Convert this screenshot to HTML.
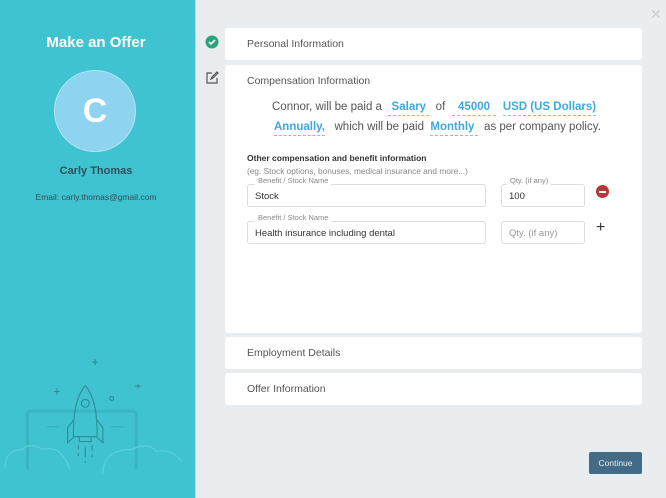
<!DOCTYPE html>
<html><head><style>
*{margin:0;padding:0;box-sizing:border-box}
body{width:666px;height:498px;overflow:hidden;background:#e9edf0;font-family:"Liberation Sans",sans-serif;position:relative}
.left{position:absolute;left:0;top:0;width:196px;height:498px;background:#40c3d0;border-right:1px solid #a8dfe8}
.t{position:absolute;color:#fff}
.card{position:absolute;left:225px;width:417px;background:#fff;border-radius:3px}
.card .h{position:absolute;left:22px;font-size:10.5px;color:#555}
.abs{position:absolute}
.blue{color:#3fa9dc;border-bottom:1px dashed #7cc4e8;padding-bottom:2px;font-weight:bold}
.inp{position:absolute;border:1px solid #dcdcdc;border-radius:3px;height:23px;font-size:9.5px;color:#333;padding:6px 7px}
.lab{position:absolute;font-size:7.5px;color:#888;background:#fff;padding:0 3px}
</style></head><body>
<div class="left">
<div class="t" style="left:0;width:192px;top:34px;text-align:center;font-size:15px;font-weight:bold">Make an Offer</div>
<div class="abs" style="left:54px;top:70px;width:82px;height:82px;border-radius:50%;background:#8ed3ef;border:1px solid #b6e4f3;color:#fff;font-size:34px;text-align:center;line-height:80px;font-weight:bold">C</div>
<div class="abs" style="left:0;width:192px;top:165px;text-align:center;font-size:11px;font-weight:bold;color:#2f4f59">Carly Thomas</div>
<div class="abs" style="left:0;width:192px;top:192px;text-align:center;font-size:8.5px;color:#2f4f59">Email: carly.thomas@gmail.com</div>
<svg class="abs" style="left:0;top:340px" width="196" height="158" viewBox="0 0 200 158" fill="none" stroke="#2e8f9a" stroke-width="1.2">
<path d="M28 130V75q0-4 4-4h103q4 0 4 4v55" stroke="#37aab6" stroke-width="3" opacity=".6"/>
<path d="M48 87h12M113 87h14" stroke="#37aab6"/>
<path d="M5 130q0-20 18-20q8-8 20 0q20-5 28 20M105 135q0-25 30-25q15-8 25 2q15-3 25 10" stroke="#5ad0dc"/>
<path d="M87 45q-13 15-12 52h24q1-37-12-52z"/>
<circle cx="87" cy="63" r="4"/>
<path d="M75 80l-6 8v15l6-5M99 80l6 8v15l-6-5M81 97v5h12v-5"/>
<path d="M80 106v4M87 108v10M94 106v5M87 122v2M80 114v3M94 115v3"/>
<path d="M97 18v6M94 21h6M58 48v6M55 51h6M141 43v5M138 45.5h6" />
<circle cx="114" cy="58" r="2"/>
</svg>
</div>
<div class="abs" style="left:650px;top:6px;color:#c8ced4;font-size:14px">✕</div>
<svg class="abs" style="left:205px;top:35px" width="14" height="14"><circle cx="7" cy="7" r="6.5" fill="#2aa37c"/><path d="M4 7l2 2 4-4" stroke="#fff" stroke-width="1.6" fill="none"/></svg>
<svg class="abs" style="left:205px;top:71px" width="14" height="14" fill="none" stroke="#555" stroke-width="1.2"><path d="M7 2H2v10h10V7"/><path d="M6 8l1-2 5-5 1 1-5 5z"/></svg>
<div class="card" style="top:28px;height:32px"><div class="h" style="top:10px">Personal Information</div></div>
<div class="card" style="top:65px;height:268px">
<div class="h" style="top:10px">Compensation Information</div>
<div class="abs" style="left:47px;top:36px;font-size:11.5px;color:#555;white-space:nowrap">Connor, will be paid a &nbsp;<span class="blue">&nbsp;Salary&nbsp;</span>&nbsp; of &nbsp;<span class="blue">&nbsp;&nbsp;45000&nbsp;&nbsp;</span>&nbsp;&nbsp;<span class="blue">USD (US Dollars)</span></div>
<div class="abs" style="left:49px;top:56px;font-size:11.5px;color:#555;white-space:nowrap"><span class="blue">Annually,</span>&nbsp;&nbsp; which will be paid &nbsp;<span class="blue">Monthly&nbsp;</span>&nbsp; as per company policy.</div>
<div class="abs" style="left:22px;top:88px;font-size:8.5px;font-weight:bold;color:#333">Other compensation and benefit information</div>
<div class="abs" style="left:22px;top:101px;font-size:8.3px;color:#888">(eg. Stock options, bonuses, medical insurance and more...)</div>
<div class="inp" style="left:22px;top:119px;width:239px">Stock</div><div class="lab" style="left:30px;top:111px">Benefit / Stock Name</div>
<div class="inp" style="left:276px;top:119px;width:84px">100</div><div class="lab" style="left:282px;top:111px">Qty. (if any)</div>
<div class="abs" style="left:371px;top:120px;width:13px;height:13px;border-radius:50%;background:#b23a3a"><div style="margin:6px 3px;height:1.5px;background:#fff"></div></div>
<div class="inp" style="left:22px;top:156px;width:239px">Health insurance including dental</div><div class="lab" style="left:30px;top:148px">Benefit / Stock Name</div>
<div class="inp" style="left:276px;top:156px;width:84px;color:#999">Qty. (if any)</div>
<div class="abs" style="left:371px;top:154px;font-size:16px;color:#333">+</div>
</div>
<div class="card" style="top:337px;height:32px"><div class="h" style="top:10px">Employment Details</div></div>
<div class="card" style="top:373px;height:32px"><div class="h" style="top:10px">Offer Information</div></div>
<div class="abs" style="left:589px;top:452px;width:53px;height:22px;background:#446b86;border-radius:2px;color:#e4edf3;font-size:8.5px;text-align:center;line-height:22px">Continue</div>
</body></html>
